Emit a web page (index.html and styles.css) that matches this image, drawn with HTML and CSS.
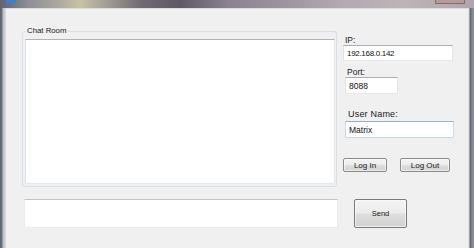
FILE: index.html
```html
<!DOCTYPE html>
<html>
<head>
<meta charset="utf-8">
<link rel="stylesheet" href="styles.css">
</head>
<body>
<div class="window">
  <div class="titlebar"><span class="appicon"></span><span class="closebtn"></span></div>
  <div class="frame-row">
    <div class="frame-left"></div>
    <div class="client">
      <div class="top-row">
        <fieldset class="group">
          <legend class="legend">Chat Room</legend>
          <div class="listbox"></div>
        </fieldset>
        <div class="side">
          <div class="label lbl-ip">IP:</div>
          <input class="textbox tb-ip" type="text" value="192.168.0.142">
          <div class="label lbl-port">Port:</div>
          <input class="textbox tb-port" type="text" value="8088">
          <div class="label lbl-user">User Name:</div>
          <input class="textbox tb-user focused" type="text" value="Matrix">
          <div class="btn-row">
            <button class="btn btn-login">Log In</button>
            <button class="btn btn-logout">Log Out</button>
          </div>
        </div>
      </div>
      <div class="bottom-row">
        <input class="textbox tb-msg" type="text" value="">
        <button class="btn btn-send">Send</button>
      </div>
    </div>
    <div class="frame-right"></div>
  </div>
</div>
</body>
</html>
```

FILE: styles.css
```css
* { box-sizing: border-box; }
html, body { margin: 0; padding: 0; }
body {
  width: 474px;
  height: 248px;
  overflow: hidden;
  font-family: "Liberation Sans", Arial, sans-serif;
  font-size: 8px;
  color: #1a1a1a;
  background: #6c7280;
}
.window {
  width: 474px;
  height: 248px;
  display: flex;
  flex-direction: column;
}
.titlebar {
  height: 8px;
  flex: none;
  position: relative;
  background: linear-gradient(90deg, #5d6470 0%, #8c8f96 6%, #a9a7a0 12%, #c9c2a4 17%, #a4a198 22%, #6e6a72 30%, #5f5866 38%, #8a8290 48%, #9c949e 60%, #b3aab2 72%, #bdb4b8 85%, #aea6ac 100%);
  filter: blur(0.6px);
}
.appicon {
  position: absolute;
  left: 6px;
  top: 0;
  width: 10px;
  height: 4px;
  border-radius: 0 0 5px 5px;
  background: #3f7fc2;
}
.closebtn {
  position: absolute;
  left: 435px;
  top: 0;
  width: 30px;
  height: 4px;
  border: 1px solid #8a6a66;
  border-top: none;
  background: #b49a98;
}
.frame-row {
  flex: 1;
  display: flex;
}
.frame-left {
  width: 6px;
  flex: none;
  background: linear-gradient(90deg, #5b606c 0px, #6e7381 2px, #b9bfcb 3px, #cdd2da 5px, #dadada 6px);
}
.frame-right {
  width: 6px;
  flex: none;
  background: linear-gradient(90deg, #d8d8d8 0px, #e6e6e6 1px, #5b5f69 2px, #737885 3px, #8f95a1 6px);
}
.client {
  flex: 1;
  background: #f0f0f0;
  border-top: 1px solid #dedede;
  padding: 17px 0 0 16px;
  display: flex;
  flex-direction: column;
}
.top-row {
  display: flex;
  align-items: flex-start;
}
.group {
  margin: 0;
  width: 315px;
  padding: 3px 1px 2px 2px;
  border: 1px solid #d5dfe5;
  border-radius: 3px;
}
.legend {
  padding: 0 2px;
  margin-left: 0;
  font-size: 7.8px;
  line-height: 10px;
  color: #1a1a1a;
}
.listbox {
  width: 310px;
  height: 145px;
  background: #ffffff;
  border: 1px solid #e3e9ef;
  border-top-color: #abb4be;
  border-left-color: #dde3ea;
}
.side {
  margin-left: 6px;
  display: flex;
  flex-direction: column;
  align-items: flex-start;
}
.label {
  line-height: 10px;
  height: 10px;
  font-size: 8.5px;
  color: #1a1a1a;
}
.lbl-ip { margin: 9px 0 0 2px; }
.lbl-port { margin: 6px 0 0 4px; }
.lbl-user { margin: 15px 0 0 5px; font-size: 9px; letter-spacing: 0.2px; }
.textbox {
  margin: 0;
  display: block;
  font-family: "Liberation Sans", Arial, sans-serif;
  font-size: 8.5px;
  color: #111;
  background: #ffffff;
  border: 1px solid #e2e3ea;
  border-top-color: #abadb3;
  border-bottom-color: #e3e9ef;
  padding: 0 3px;
  outline: none;
  border-radius: 0;
}
.tb-ip { width: 110px; height: 16px; margin-top: 0; font-size: 8px; letter-spacing: -0.3px; }
.tb-port { width: 53px; height: 17px; margin-left: 2px; }
.tb-user { width: 109px; height: 17px; margin: 2px 0 0 2px; }
.focused {
  border-color: #c5daed;
  border-top-color: #8fb3d6;
}
.btn-row {
  display: flex;
  gap: 13px;
  margin-top: 20px;
}
.btn {
  margin: 0;
  padding: 0;
  font-family: "Liberation Sans", Arial, sans-serif;
  font-size: 8px;
  color: #1a1a1a;
  border: 1px solid #8a8a8a;
  border-radius: 2px;
  background: linear-gradient(180deg, #f4f4f4 0%, #ececec 48%, #dedede 52%, #d2d2d2 100%);
  box-shadow: inset 0 0 0 1px rgba(255,255,255,0.6);
}
.btn-login { width: 44px; height: 14px; }
.btn-logout { width: 50px; height: 14px; }
.bottom-row {
  display: flex;
  margin-top: 12px;
  padding-left: 2px;
}
.tb-msg {
  width: 314px;
  height: 29px;
  border-color: #ececec;
  border-top-color: #c4c4c4;
  border-bottom-color: #eaeaea;
}
.btn-send {
  width: 53px;
  height: 29px;
  margin-left: 16px;
  border-color: #7a7a7a;
  font-size: 7.5px;
}
```
